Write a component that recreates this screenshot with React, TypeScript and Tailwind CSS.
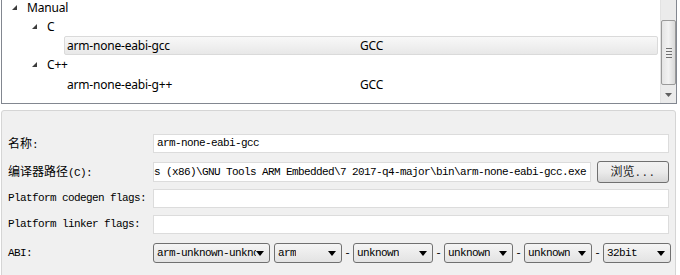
import React from "react";

const Tri = () => (
  <svg width="5" height="5" viewBox="0 0 5 5" className="shrink-0">
    <polygon points="5,0 5,5 0,5" fill="#3c3c3c" />
  </svg>
);

const Arrow = () => (
  <svg width="8" height="5" viewBox="0 0 8 5" className="shrink-0">
    <polygon points="0,0 8,0 4,5" fill="#000" />
  </svg>
);

const mono = { fontFamily: '"Liberation Mono", "Noto Sans CJK SC", monospace' };

function Select({ w, text }: { w: string; text: string }) {
  return (
    <div
      className={`${w} h-[20px] shrink-0 flex items-center justify-between pl-[3px] pr-[5px] border border-[#707070] rounded-[3px] bg-gradient-to-b from-[#f5f5f5] to-[#e3e3e3] overflow-hidden`}
    >
      <span className="text-[11px] tracking-[-0.6px] text-black whitespace-nowrap overflow-hidden leading-none" style={mono}>
        {text}
      </span>
      <Arrow />
    </div>
  );
}

const Dash = () => (
  <span className="w-[11px] shrink-0 text-center text-[11px] text-black leading-none" style={mono}>
    -
  </span>
);

export default function App() {
  const sans = { fontFamily: '"Noto Sans", "Liberation Sans", sans-serif' };
  return (
    <div className="w-[680px] h-[275px] overflow-hidden bg-white relative">
      {/* tree panel */}
      <div className="ml-px w-[676px] h-[104px] border-l border-r border-b border-[#828790] flex">
        <div className="flex-1 flex flex-col text-[12px] tracking-[-0.2px] text-black" style={sans}>
          <div className="h-[19px] -mt-[2px] flex items-center">
            <div className="w-[10px]" />
            <Tri />
            <span className="ml-[10px] leading-none">Manual</span>
          </div>
          <div className="h-[19px] flex items-center">
            <div className="w-[30px]" />
            <Tri />
            <span className="ml-[10px] leading-none">C</span>
          </div>
          <div className="h-[19px] flex items-center">
            <div className="w-[62px]" />
            <div className="flex-1 mr-[2px] h-[19px] flex items-center border border-[#dadada] rounded-[2px] bg-gradient-to-b from-[#f8f8f8] to-[#e8e8e8]">
              <span className="ml-[2px] w-[293px] leading-none">arm-none-eabi-gcc</span>
              <span className="leading-none">GCC</span>
            </div>
          </div>
          <div className="h-[19px] flex items-center">
            <div className="w-[30px]" />
            <Tri />
            <span className="ml-[10px] leading-none">C++</span>
          </div>
          <div className="h-[19px] mt-px flex items-center">
            <div className="w-[65px]" />
            <span className="w-[293px] leading-none">arm-none-eabi-g++</span>
            <span className="leading-none">GCC</span>
          </div>
        </div>
        {/* scrollbar */}
        <div className="w-[16px] h-full bg-[#ebebeb] border-l border-[#e2e2e2] flex flex-col items-center">
          <div className="mt-[20px] w-[15px] h-[65px] rounded-[2px] border border-[#9a9a9a] bg-gradient-to-r from-[#e4e4e4] via-[#f2f2f2] to-[#d8d8d8] flex flex-col items-center justify-center gap-[2px]">
            <div className="w-[6px] h-px bg-[#707070]" />
            <div className="w-[6px] h-px bg-[#707070]" />
            <div className="w-[6px] h-px bg-[#707070]" />
            <div className="w-[6px] h-px bg-[#707070]" />
          </div>
          <div className="mt-[8px]">
            <svg width="7" height="4" viewBox="0 0 7 4">
              <polygon points="0,0 7,0 3.5,4" fill="#606060" />
            </svg>
          </div>
        </div>
      </div>

      {/* lower panel */}
      <div className="mt-[6px] ml-px w-[675px] h-[180px] border border-[#d5d5d5] rounded-[3px] bg-[#f0f0f0] flex flex-col text-black">
        {/* row 1 */}
        <div className="mt-[23px] flex items-center h-[19px]">
          <span className="w-[151px] pl-[6px] leading-none whitespace-nowrap" style={mono}>
            <span className="text-[12px]">名称</span>
            <span className="text-[11px] tracking-[-0.6px]">:</span>
          </span>
          <div className="w-[516px] h-[19px] bg-white border border-[#dcdcdc] flex items-center pl-[3px]">
            <span className="text-[11px] tracking-[-0.6px] leading-none" style={mono}>
              arm-none-eabi-gcc
            </span>
          </div>
        </div>
        {/* row 2 */}
        <div className="mt-[8px] flex items-center h-[22px]">
          <span className="w-[151px] shrink-0 pl-[6px] leading-none whitespace-nowrap" style={mono}>
            <span className="text-[12px]">编译器路径</span>
            <span className="text-[11px] tracking-[-0.6px]">(C):</span>
          </span>
          <div className="w-[438px] h-[20px] bg-white border border-[#dcdcdc] flex items-center justify-end pr-[4px] overflow-hidden">
            <span className="text-[11px] tracking-[-0.6px] leading-none whitespace-nowrap" style={mono}>
              C:\Program Files (x86)\GNU Tools ARM Embedded\7 2017-q4-major\bin\arm-none-eabi-gcc.exe
            </span>
          </div>
          <div className="ml-[6px] w-[72px] h-[22px] border border-[#707070] rounded-[3px] bg-gradient-to-b from-[#f2f2f2] via-[#ebebeb] to-[#d6d6d6] flex items-center justify-center">
            <span className="leading-none text-[#222]" style={mono}>
              <span className="text-[12px]">浏览</span>
              <span className="text-[11px] tracking-[0.4px]">...</span>
            </span>
          </div>
        </div>
        {/* row 3 */}
        <div className="mt-[6px] flex items-center h-[19px]">
          <span className="w-[151px] pl-[6px] text-[11px] tracking-[-0.6px] leading-none whitespace-nowrap" style={mono}>
            Platform codegen flags:
          </span>
          <div className="w-[516px] h-[19px] bg-white border border-[#dcdcdc]" />
        </div>
        {/* row 4 */}
        <div className="mt-[7px] flex items-center h-[19px]">
          <span className="w-[151px] pl-[6px] text-[11px] tracking-[-0.6px] leading-none whitespace-nowrap" style={mono}>
            Platform linker flags:
          </span>
          <div className="w-[516px] h-[19px] bg-white border border-[#dcdcdc]" />
        </div>
        {/* row 5 */}
        <div className="mt-[9px] flex items-center h-[20px]">
          <span className="w-[151px] pl-[6px] text-[11px] tracking-[-0.6px] leading-none" style={mono}>
            ABI:
          </span>
          <Select w="w-[117px]" text="arm-unknown-unknown" />
          <div className="w-[4px] shrink-0" />
          <Select w="w-[68px]" text="arm" />
          <Dash />
          <Select w="w-[80px]" text="unknown" />
          <Dash />
          <Select w="w-[69px]" text="unknown" />
          <Dash />
          <Select w="w-[68px]" text="unknown" />
          <Dash />
          <Select w="w-[68px]" text="32bit" />
        </div>
      </div>
    </div>
  );
}
